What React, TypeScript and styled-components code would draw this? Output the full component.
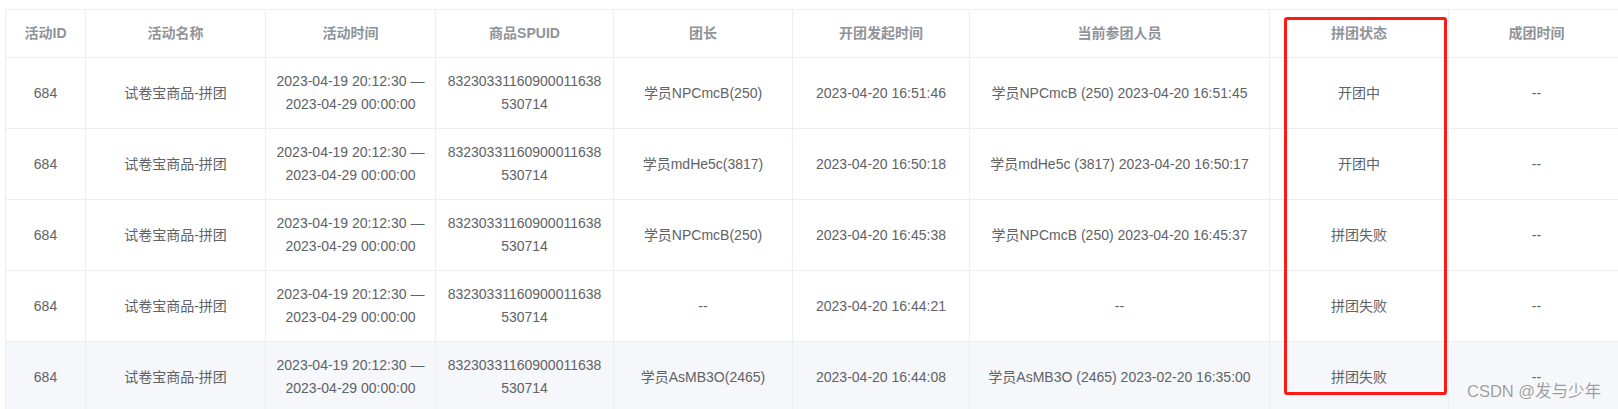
import React from "react";
import styled, { createGlobalStyle } from "styled-components";

const GlobalStyle = createGlobalStyle`
  html, body {
    margin: 0;
    padding: 0;
    background: #ffffff;
    overflow: hidden;
    width: 1618px;
    height: 409px;
  }
  body {
    font-family: "Liberation Sans", "Noto Sans CJK SC", Arial, sans-serif;
    font-size: 14px;
  }
`;

const COLS = [80, 180, 170, 178, 179, 177, 300, 179, 176];

const Page = styled.div`
  padding: 9px 0 0 5px;
  width: 1618px;
  box-sizing: border-box;
`;

const TableWrap = styled.div`
  position: relative;
  width: max-content;
`;

const Grid = styled.div`
  display: grid;
  grid-template-columns: ${COLS.map((c) => `${c}px`).join(" ")};
  border-top: 1px solid #ebeef5;
  border-left: 1px solid #ebeef5;
`;

const Row = styled.div<{ $hover?: boolean; $head?: boolean }>`
  display: contents;
  & > div {
    background: ${(p) => (p.$hover ? "#f5f7fa" : "#ffffff")};
    height: ${(p) => (p.$head ? "47px" : "70px")};
  }
`;

const Cell = styled.div`
  box-sizing: content-box;
  border-right: 1px solid #ebeef5;
  border-bottom: 1px solid #ebeef5;
  padding: 0 10px;
  display: flex;
  flex-direction: column;
  align-items: center;
  justify-content: center;
  text-align: center;
  line-height: 23px;
  color: #606266;
  white-space: nowrap;
  overflow: hidden;
`;

const HeadCell = styled(Cell)`
  color: #909399;
  font-weight: bold;
`;

const RedBox = styled.div`
  position: absolute;
  left: 1279px;
  top: 8px;
  width: 157px;
  height: 372px;
  border: 3px solid #fb1a14;
  border-radius: 3px;
  pointer-events: none;
`;

const Watermark = styled.div`
  position: absolute;
  left: 1462px;
  top: 372px;
  font-family: "Liberation Sans", "Noto Sans CJK SC", sans-serif;
  font-size: 16.5px;
  line-height: 20px;
  color: rgba(120, 120, 120, 0.72);
  text-shadow: 0 0 1px rgba(255, 255, 255, 0.8);
  white-space: nowrap;
  pointer-events: none;
`;

const headers = [
  "活动ID",
  "活动名称",
  "活动时间",
  "商品SPUID",
  "团长",
  "开团发起时间",
  "当前参团人员",
  "拼团状态",
  "成团时间",
];

type Rec = {
  leader: string;
  start: string;
  member: string;
  status: string;
};

const records: Rec[] = [
  {
    leader: "学员NPCmcB(250)",
    start: "2023-04-20 16:51:46",
    member: "学员NPCmcB (250) 2023-04-20 16:51:45",
    status: "开团中",
  },
  {
    leader: "学员mdHe5c(3817)",
    start: "2023-04-20 16:50:18",
    member: "学员mdHe5c (3817) 2023-04-20 16:50:17",
    status: "开团中",
  },
  {
    leader: "学员NPCmcB(250)",
    start: "2023-04-20 16:45:38",
    member: "学员NPCmcB (250) 2023-04-20 16:45:37",
    status: "拼团失败",
  },
  {
    leader: "--",
    start: "2023-04-20 16:44:21",
    member: "--",
    status: "拼团失败",
  },
  {
    leader: "学员AsMB3O(2465)",
    start: "2023-04-20 16:44:08",
    member: "学员AsMB3O (2465) 2023-02-20 16:35:00",
    status: "拼团失败",
  },
];

const Line = styled.span`
  display: block;
`;

export default function App() {
  return (
    <>
      <GlobalStyle />
      <Page>
        <TableWrap>
          <Grid>
            <Row $head>
              {headers.map((h) => (
                <HeadCell key={h}>{h}</HeadCell>
              ))}
            </Row>
            {records.map((r, i) => (
              <Row key={i} $hover={i === 4}>
                <Cell>684</Cell>
                <Cell>试卷宝商品-拼团</Cell>
                <Cell>
                  <Line>2023-04-19 20:12:30 —</Line>
                  <Line>2023-04-29 00:00:00</Line>
                </Cell>
                <Cell>
                  <Line>83230331160900011638</Line>
                  <Line>530714</Line>
                </Cell>
                <Cell>{r.leader}</Cell>
                <Cell>{r.start}</Cell>
                <Cell>{r.member}</Cell>
                <Cell>{r.status}</Cell>
                <Cell>--</Cell>
              </Row>
            ))}
          </Grid>
          <RedBox />
          <Watermark>CSDN @发与少年</Watermark>
        </TableWrap>
      </Page>
    </>
  );
}
